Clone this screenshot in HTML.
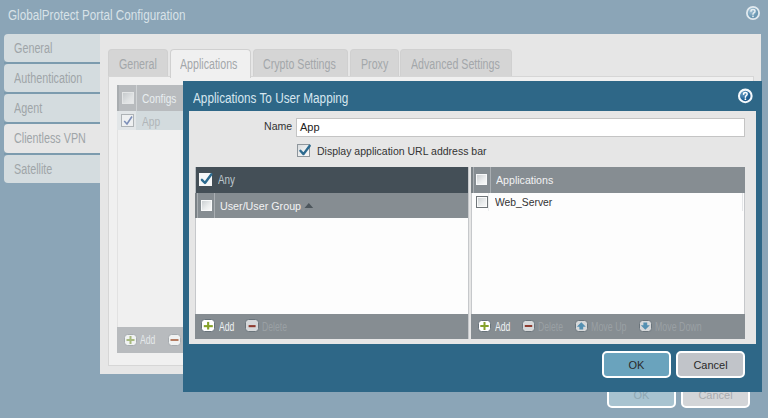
<!DOCTYPE html>
<html><head><meta charset="utf-8">
<style>
*{box-sizing:border-box;margin:0;padding:0}
html,body{width:768px;height:418px;overflow:hidden}
body{background:#8ba5b7;font-family:"Liberation Sans",sans-serif;position:relative}
.a{position:absolute}
svg{position:absolute;overflow:visible}
.c{display:inline-block;transform-origin:0 0;white-space:nowrap;position:absolute}
.title{left:8px;top:7px;font-size:14px;color:#d8e2e8;}
.ltab{left:4px;width:96px;height:28px;background:#d4dcdf;border-radius:4px 0 0 4px;}
.ltab .c{left:10px;top:6px;font-size:14px;color:#9fa5a8;transform:scaleX(.77)}
.sep{left:4px;width:96px;height:2px;background:#7c9bae}
.panel{left:100px;top:34px;width:661px;height:340px;background:#e6e6e6}
.ptab{top:49px;height:28px;background:#d5d5d5;border-radius:4px 4px 0 0;border:1px solid #d0d0d0;border-bottom:none}
.ptab .c{top:6px;font-size:14px;color:#a3a7aa;transform:scaleX(.76)}
.content{left:108px;top:76px;width:646px;height:290px;background:#f0f0f0;border:1px solid #d6d6d6}
.modal{left:183px;top:81px;width:579px;height:311px;background:#2e6787}
.body{left:189px;top:111px;width:567px;height:233px;background:#e6e6e6}
.grid{background:#fdfdfd;border:1px solid #c6c8cb}
.dark{background:#444f57}
.colh{background:#868d92}
.foot{background:#868d92}
.btn{height:27px;border:2px solid #fff;border-radius:5px;font-size:11px;text-align:center;line-height:25px;color:#2a2a2a}
.ft{font-size:12px;transform:scaleX(.72)}
</style></head><body>
<svg width="0" height="0" style="position:absolute">
<defs>
<linearGradient id="cbg" x1="0" y1="0" x2="1" y2="1"><stop offset="0" stop-color="#c9cdd0"/><stop offset=".6" stop-color="#eceeef"/><stop offset="1" stop-color="#fafafa"/></linearGradient>
<linearGradient id="cbw" x1="0" y1="0" x2="1" y2="1"><stop offset="0" stop-color="#d6d9db"/><stop offset=".5" stop-color="#eceeef"/><stop offset="1" stop-color="#f8f8f8"/></linearGradient>
<radialGradient id="hg" cx=".35" cy=".3" r=".8"><stop offset="0" stop-color="#6fa3c9"/><stop offset=".6" stop-color="#1f5f93"/><stop offset="1" stop-color="#1a4f80"/></radialGradient>
<radialGradient id="hg2" cx=".35" cy=".3" r=".8"><stop offset="0" stop-color="#a9c6d8"/><stop offset=".6" stop-color="#6f9bb6"/><stop offset="1" stop-color="#6690ac"/></radialGradient>
</defs>
</svg>
<!-- background dialog -->
<div class="a c title" style="transform:scaleX(.835)">GlobalProtect Portal Configuration</div>
<svg style="left:746px;top:6px" width="14" height="14"><circle cx="7" cy="7" r="6.1" fill="url(#hg2)" stroke="#e2eaef" stroke-width="1.8"/><path d="M5 5.3 Q5 3.6 7 3.6 Q9 3.6 9 5.2 Q9 6.3 7.6 7 Q7 7.4 7 8.3" stroke="#e6eef2" stroke-width="1.5" fill="none" stroke-linecap="round"/><circle cx="7" cy="10.3" r=".9" fill="#e6eef2"/></svg>

<div class="a ltab" style="top:34px"><span class="c">General</span></div>
<div class="a sep" style="top:62px"></div>
<div class="a ltab" style="top:64px"><span class="c">Authentication</span></div>
<div class="a sep" style="top:92px"></div>
<div class="a ltab" style="top:94px"><span class="c">Agent</span></div>
<div class="a sep" style="top:122px"></div>
<div class="a ltab" style="top:124px;height:29px;background:#e6e6e6"><span class="c">Clientless VPN</span></div>
<div class="a sep" style="top:153px"></div>
<div class="a ltab" style="top:155px"><span class="c">Satellite</span></div>

<div class="a panel"></div>
<div class="a ptab" style="left:108px;width:60px"><span class="c" style="left:10px">General</span></div>
<div class="a ptab" style="left:170px;width:81px;background:#f0f0f0;height:29px;z-index:2"><span class="c" style="left:9px">Applications</span></div>
<div class="a ptab" style="left:253px;width:95px"><span class="c" style="left:9px">Crypto Settings</span></div>
<div class="a ptab" style="left:350px;width:49px"><span class="c" style="left:10px">Proxy</span></div>
<div class="a ptab" style="left:400px;width:112px"><span class="c" style="left:10px">Advanced Settings</span></div>
<div class="a content"></div>
<!-- bg table -->
<div class="a" style="left:117px;top:85px;width:70px;height:26px;background:#b8bbbe"></div>
<div class="a" style="left:117px;top:85px;width:2px;height:26px;background:#a9adb0"></div>
<div class="a" style="left:136px;top:85px;width:1px;height:26px;background:#d0d3d5"></div>
<svg style="left:122px;top:92px" width="12" height="12"><rect x=".5" y=".5" width="11" height="11" fill="url(#cbg)" stroke="#f2f3f4" opacity=".75"/></svg>
<div class="a" style="left:117px;top:130px;width:1px;height:197px;background:#e2e2e2"></div>
<div class="a c" style="left:142px;top:91px;font-size:13px;color:#e8eef0;transform:scaleX(.78)">Configs</div>
<div class="a" style="left:117px;top:111px;width:70px;height:19px;background:#d3dbde"></div>
<div class="a" style="left:117px;top:111px;width:19px;height:19px;background:#e2e6e8"></div>
<svg style="left:121px;top:114px" width="13" height="13"><rect x=".5" y=".5" width="12" height="12" fill="#eef0f1" stroke="#aeb3b6"/><path d="M3.2 7 L6 10 L11 2.5" stroke="#7d8fb8" stroke-width="1.6" fill="none"/></svg>
<div class="a c" style="left:142px;top:114px;font-size:13px;color:#b0b5b8;transform:scaleX(.78)">App</div>
<div class="a" style="left:117px;top:327px;width:70px;height:26px;background:#b8bbbe"></div>
<svg style="left:124px;top:334px" width="13" height="12"><rect x=".5" y=".5" width="12" height="11" rx="3" fill="#f0f2f2" stroke="#a6abaf"/><rect x="2.5" y="5" width="8" height="2" fill="#a8b97e"/><rect x="5.5" y="2" width="2" height="8" fill="#a8b97e"/></svg>
<div class="a c ft" style="left:140px;top:333px;color:#e4e8ea">Add</div>
<svg style="left:168px;top:334px" width="13" height="12"><rect x=".5" y=".5" width="12" height="11" rx="3" fill="#f0f2f2" stroke="#a6abaf"/><rect x="2.5" y="5" width="8" height="2" fill="#b47c62"/></svg>

<div class="a btn" style="left:607px;top:381px;width:69px;background:#a8c3d0;color:#8ea7b3">OK</div>
<div class="a btn" style="left:681px;top:381px;width:69px;background:#d3d5d8;color:#a8abaf">Cancel</div>

<!-- modal -->
<div class="a modal"></div>
<div class="a c" style="left:193px;top:90px;font-size:14px;color:#d6e6ef;transform:scaleX(.84)">Applications To User Mapping</div>
<svg style="left:738px;top:88px" width="15" height="16"><circle cx="7.3" cy="7.9" r="6.3" fill="url(#hg)" stroke="#f4f8fb" stroke-width="2.1"/><path d="M5.6 6.3 Q5.6 4.6 7.4 4.6 Q9.2 4.6 9.2 6.1 Q9.2 7.1 8 7.8 Q7.4 8.2 7.4 9.3" stroke="#fff" stroke-width="1.5" fill="none" stroke-linecap="round"/><circle cx="7.4" cy="11.2" r=".9" fill="#fff"/></svg>
<div class="a body"></div>
<div class="a c" style="left:264px;top:120px;font-size:11px;color:#333;transform:scaleX(.96)">Name</div>
<div class="a" style="left:296px;top:118px;width:449px;height:19px;background:#fff;border:1px solid #c4c4c4"></div>
<div class="a" style="left:300px;top:121px;font-size:11px;color:#222">App</div>
<svg style="left:297px;top:144px" width="13" height="13"><rect x=".5" y=".5" width="12" height="12" fill="url(#cbw)" stroke="#8e969c"/><path d="M3.4 6.8 L6.5 10.1 L12.7 1.7" stroke="#2c6a8f" stroke-width="2.4" fill="none" stroke-linecap="round" stroke-linejoin="round"/></svg>
<div class="a c" style="left:317px;top:145px;font-size:11px;color:#333;transform:scaleX(.955)">Display application URL address bar</div>

<!-- left grid -->
<div class="a grid" style="left:195px;top:167px;width:274px;height:172px"></div>
<div class="a dark" style="left:195px;top:167px;width:273px;height:26px"></div>
<div class="a" style="left:195px;top:167px;width:1px;height:26px;background:#b9bec2"></div>
<svg style="left:199px;top:173px" width="13" height="13"><rect x="0" y="0" width="13" height="13" fill="#f6f7f8"/><path d="M2.9 6.8 L6 10 L12.4 1.3" stroke="#2c6a8f" stroke-width="2.4" fill="none" stroke-linecap="round" stroke-linejoin="round"/></svg>
<div class="a c" style="left:218px;top:172px;font-size:13px;color:#bcc6cc;transform:scaleX(.76)">Any</div>
<div class="a colh" style="left:195px;top:193px;width:273px;height:25px"></div>
<div class="a" style="left:195px;top:193px;width:2px;height:25px;background:#7b8287"></div>
<div class="a" style="left:197px;top:193px;width:1px;height:25px;background:#a9aeb2"></div>
<svg style="left:201px;top:200px" width="11" height="11"><rect x=".5" y=".5" width="10" height="10" fill="url(#cbg)" stroke="#f8f9fa"/></svg>
<div class="a" style="left:214px;top:193px;width:1px;height:25px;background:#a9aeb2"></div>
<div class="a c" style="left:220px;top:200px;font-size:11px;color:#f2f2f2;transform:scaleX(.975)">User/User Group</div>
<svg style="left:304px;top:202px" width="10" height="7"><path d="M0.5 6 L4.8 1 L9.2 6 Z" fill="#4d565c"/></svg>
<div class="a foot" style="left:195px;top:314px;width:273px;height:25px"></div>
<svg style="left:201px;top:319px" width="14" height="13"><rect x=".5" y=".5" width="13" height="12" rx="3" fill="#fff" stroke="#68737b"/><rect x="2.8" y="6.1" width="9" height="2.1" fill="#86a22a"/><rect x="6.1" y="2.9" width="2.1" height="7.6" fill="#86a22a"/></svg>
<div class="a c ft" style="left:219px;top:320px;color:#eef1f3">Add</div>
<svg style="left:245px;top:319px" width="14" height="13"><rect x=".5" y=".5" width="13" height="12" rx="3" fill="#d6d8da" stroke="#6b757c"/><rect x="3.6" y="6.1" width="7" height="2.1" fill="#8e3b2f"/></svg>
<div class="a c ft" style="left:262px;top:320px;color:#9aa0a4">Delete</div>

<!-- right grid -->
<div class="a grid" style="left:471px;top:167px;width:274px;height:172px"></div>
<div class="a" style="left:742px;top:193px;width:1px;height:18px;background:#e4e6e8"></div>
<div class="a colh" style="left:471px;top:167px;width:274px;height:26px"></div>
<div class="a" style="left:471px;top:167px;width:2px;height:26px;background:#7b8287"></div>
<div class="a" style="left:473px;top:167px;width:1px;height:26px;background:#a9aeb2"></div>
<svg style="left:476px;top:174px" width="11" height="11"><rect x=".5" y=".5" width="10" height="10" fill="url(#cbg)" stroke="#f8f9fa"/></svg>
<div class="a" style="left:490px;top:167px;width:1px;height:26px;background:#a9aeb2"></div>
<div class="a c" style="left:496px;top:174px;font-size:11px;color:#f2f2f2;transform:scaleX(.965)">Applications</div>
<svg style="left:476px;top:196px" width="12" height="12"><rect x=".5" y=".5" width="11" height="11" fill="url(#cbg)" stroke="#70767a"/><rect x="1.5" y="1.5" width="9" height="9" fill="none" stroke="#fafafa"/></svg>
<div class="a" style="left:488px;top:193px;width:1px;height:18px;background:#eceeef"></div>
<div class="a c" style="left:495px;top:196px;font-size:11px;color:#333;transform:scaleX(.94)">Web_Server</div>
<div class="a foot" style="left:471px;top:314px;width:274px;height:25px"></div>
<svg style="left:478px;top:320px" width="13" height="12"><rect x=".5" y=".5" width="12" height="11" rx="3" fill="#fff" stroke="#68737b"/><rect x="2.3" y="5" width="8.4" height="2" fill="#86a22a"/><rect x="5.5" y="2" width="2" height="8" fill="#86a22a"/></svg>
<div class="a c ft" style="left:495px;top:320px;color:#eef1f3">Add</div>
<svg style="left:522px;top:320px" width="13" height="12"><rect x=".5" y=".5" width="12" height="11" rx="3" fill="#d6d8da" stroke="#6b757c"/><rect x="2.8" y="5" width="7.4" height="2" fill="#8e3b2f"/></svg>
<div class="a c ft" style="left:538px;top:320px;color:#9aa0a4">Delete</div>
<svg style="left:575px;top:320px" width="13" height="12"><rect x=".5" y=".5" width="12" height="11" rx="3" fill="#d6d8da" stroke="#6b757c"/><path d="M6.3 2.3 L10.8 6.8 L8.2 6.8 L8.2 9.6 L4.4 9.6 L4.4 6.8 L1.8 6.8 Z" fill="#5490b2"/></svg>
<div class="a c ft" style="left:591px;top:320px;color:#9aa0a4;transform:scaleX(.74)">Move Up</div>
<svg style="left:639px;top:320px" width="13" height="12"><rect x=".5" y=".5" width="12" height="11" rx="3" fill="#d6d8da" stroke="#6b757c"/><path d="M6.3 9.7 L10.8 5.2 L8.2 5.2 L8.2 2.4 L4.4 2.4 L4.4 5.2 L1.8 5.2 Z" fill="#5490b2"/></svg>
<div class="a c ft" style="left:655px;top:320px;color:#9aa0a4;transform:scaleX(.735)">Move Down</div>

<div class="a btn" style="left:602px;top:351px;width:69px;background:#6aa3bd">OK</div>
<div class="a btn" style="left:676px;top:351px;width:69px;background:#c1c4c9">Cancel</div>
</body></html>
